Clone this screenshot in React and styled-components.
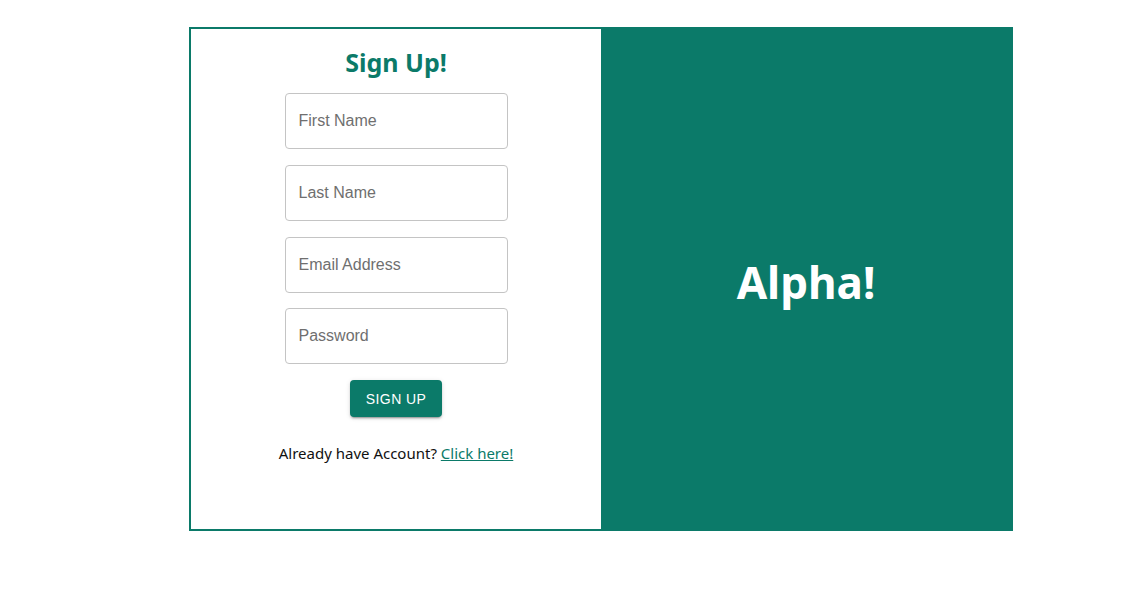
import React from 'react';
import styled, { createGlobalStyle } from 'styled-components';

const teal = '#0b7a69';

const GlobalStyle = createGlobalStyle`
  html, body {
    margin: 0;
    padding: 0;
    background: #fff;
  }
  body {
    font-family: "Noto Sans", "Open Sans", sans-serif;
  }
`;

const Page = styled.div`
  padding: 27px 0 0 189px;
`;

const Card = styled.div`
  display: flex;
  width: 824px;
  height: 504px;
`;

const FormPanel = styled.div`
  box-sizing: border-box;
  width: 412px;
  height: 100%;
  border: 2px solid ${teal};
  border-right: none;
  display: flex;
  flex-direction: column;
  align-items: center;
  padding-top: 16px;
`;

const Title = styled.h2`
  margin: 0 0 14px;
  font-size: 25px;
  line-height: 34px;
  font-weight: 700;
  color: ${teal};
`;

const Fields = styled.div`
  display: flex;
  flex-direction: column;
  gap: 16px;
`;

const Input = styled.input`
  box-sizing: border-box;
  width: 223px;
  height: 56px;
  padding: 0 13px;
  border: 1px solid #c4c4c4;
  border-radius: 4px;
  font-family: "Liberation Sans", Arial, sans-serif;
  font-size: 16px;
  color: #333;
  outline: none;

  &:last-child {
    margin-top: -1px;
  }

  &::placeholder {
    color: #6f6f6f;
  }
`;

const Button = styled.button`
  margin-top: 16px;
  width: 92px;
  height: 37px;
  border: none;
  border-radius: 4px;
  background: ${teal};
  color: #fff;
  font-family: "Liberation Sans", Arial, sans-serif;
  font-size: 14px;
  letter-spacing: 0.4px;
  text-transform: uppercase;
  box-shadow: 0 3px 1px -2px rgba(0, 0, 0, 0.2), 0 2px 2px 0 rgba(0, 0, 0, 0.14),
    0 1px 5px 0 rgba(0, 0, 0, 0.12);
  cursor: pointer;
`;

const Footer = styled.p`
  margin: 25px 0 0;
  font-size: 15px;
  line-height: 22px;
  color: #111;
`;

const Link = styled.a`
  color: ${teal};
  text-decoration: underline;
`;

const BrandPanel = styled.div`
  width: 412px;
  height: 100%;
  background: ${teal};
  display: flex;
  align-items: center;
  justify-content: center;
`;

const Brand = styled.h1`
  margin: 0 0 0 -2px;
  padding-top: 6px;
  font-size: 44px;
  font-weight: 700;
  color: #fff;
`;

const fields = ['First Name', 'Last Name', 'Email Address', 'Password'];

const App = () => {
  return (
    <>
      <GlobalStyle />
      <Page>
        <Card>
          <FormPanel>
            <Title>Sign Up!</Title>
            <Fields>
              {fields.map((f) => (
                <Input key={f} placeholder={f} type={f === 'Password' ? 'password' : 'text'} />
              ))}
            </Fields>
            <Button>Sign Up</Button>
            <Footer>
              Already have Account? <Link href="#">Click here!</Link>
            </Footer>
          </FormPanel>
          <BrandPanel>
            <Brand>Alpha!</Brand>
          </BrandPanel>
        </Card>
      </Page>
    </>
  );
};

export default App;
